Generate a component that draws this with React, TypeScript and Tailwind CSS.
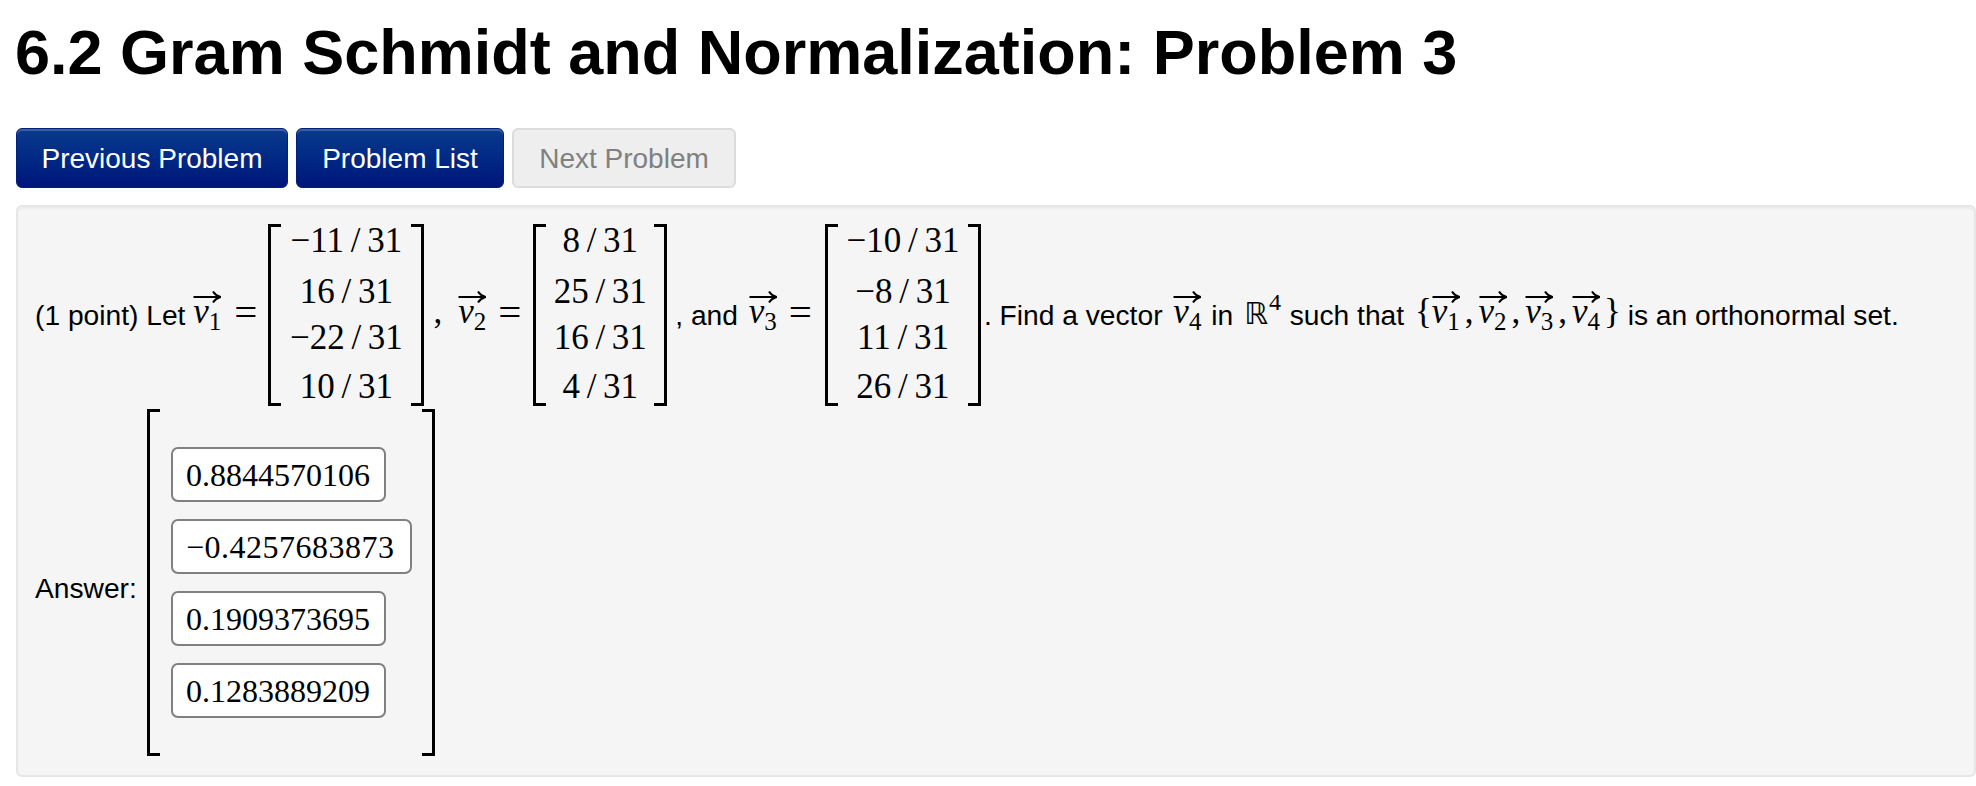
const serif = "font-['Liberation_Serif',serif]";

function Vec({ n, cls = "" }: { n: string; cls?: string }) {
  return (
    <span className={`relative inline-flex shrink-0 w-[28px] h-[50px] items-end ${serif} text-[35px] leading-[40px] text-black ${cls}`}>
      <i className="-translate-y-[8px]">v</i>
      <span className="text-[25px] leading-[25px] -translate-y-[6px]">{n}</span>
      <svg className="absolute left-0 -top-[1px]" width="28" height="16" viewBox="0 0 28 16" fill="none">
        <path d="M0.5 8H27M20 2.5C21.5 5 24 7 27.5 8C24 9 21.5 11 20 13.5" stroke="#000" strokeWidth="2" />
      </svg>
    </span>
  );
}

function Bracket({ side }: { side: "l" | "r" }) {
  return (
    <div
      className={`w-[13px] self-stretch shrink-0 border-y-[3px] border-black ${side === "l" ? "border-l-[3px]" : "border-r-[3px]"}`}
    />
  );
}

function Matrix({ rows, width }: { rows: string[]; width: string }) {
  const gaps = ["mt-0", "mt-[17px]", "mt-3", "mt-[15px]"];
  return (
    <div className={`flex shrink-0 h-[182px] ${width}`}>
      <Bracket side="l" />
      <div className={`flex-1 flex flex-col items-center ${serif} text-[35px] leading-[34px] [word-spacing:-2px]`}>
        {rows.map((r, i) => (
          <div key={i} className={gaps[i]}>
            {r}
          </div>
        ))}
      </div>
      <Bracket side="r" />
    </div>
  );
}

function Eq({ cls }: { cls: string }) {
  return <span className={`${serif} text-[41px] leading-[40px] -translate-y-[3px] ${cls}`}>=</span>;
}

function S({ children, cls = "" }: { children: string; cls?: string }) {
  return <span className={`${serif} text-[35px] -translate-y-[3px] ${cls}`}>{children}</span>;
}

function Button({ children, width, disabled }: { children: string; width: string; disabled?: boolean }) {
  return (
    <button
      className={
        disabled
          ? `${width} h-[60px] pt-[2px] rounded-[6px] border-2 border-[#dcdcdc] bg-[#eeeeee] text-[#808080] text-[28px] text-center`
          : `${width} h-[60px] pt-[2px] rounded-[6px] border border-[#00207a] bg-gradient-to-b from-[#0b3a8c] to-[#00137c] shadow-[inset_0_2px_0_rgba(255,255,255,0.2)] text-white text-[28px] text-center`
      }
    >
      {children}
    </button>
  );
}

function AnswerBox({ value, width }: { value: string; width: string }) {
  return (
    <div className={`${width} h-[55px] rounded-[7px] border-2 border-[#808080] bg-white pl-[13px] ${serif} text-[32px] leading-[53px] text-black`}>
      {value}
    </div>
  );
}

export default function App() {
  return (
    <div className="w-[1976px] h-[786px] overflow-hidden bg-white pl-4 font-['Liberation_Sans',sans-serif] text-black text-[28.2px]">
      <h1 className="h-[104px] leading-[104px] text-[63px] font-bold -ml-[1px] whitespace-nowrap">
        6.2 Gram Schmidt and Normalization: Problem 3
      </h1>
      <div className="flex gap-2 mt-6">
        <Button width="w-[272px]">Previous Problem</Button>
        <Button width="w-[208px]">Problem List</Button>
        <Button width="w-[224px]" disabled>
          Next Problem
        </Button>
      </div>
      <div className="mt-[17px] h-[572px] w-[1960px] rounded-[6px] border-2 border-[#e6e6e6] bg-[#f5f5f5] shadow-[inset_0_2px_2px_rgba(0,0,0,0.04)] pl-[17px] pt-[17px]">
        <div className="flex items-center h-[182px] whitespace-pre">
          <span>(1 point) Let </span>
          <Vec n="1" />
          <Eq cls="ml-[13px]" />
          <div className="ml-[11px]">
            <Matrix rows={["−11 / 31", "16 / 31", "−22 / 31", "10 / 31"]} width="w-[156px]" />
          </div>
          <S cls="ml-[9px]">,</S>
          <Vec n="2" cls="ml-[16px]" />
          <Eq cls="ml-[12px]" />
          <div className="ml-[12px]">
            <Matrix rows={["8 / 31", "25 / 31", "16 / 31", "4 / 31"]} width="w-[134px]" />
          </div>
          <span className="ml-[8px]">, and </span>
          <Vec n="3" cls="ml-[3px]" />
          <Eq cls="ml-[12px]" />
          <div className="ml-[13px]">
            <Matrix rows={["−10 / 31", "−8 / 31", "11 / 31", "26 / 31"]} width="w-[156px]" />
          </div>
          <span className="ml-[3px]">. Find a vector </span>
          <Vec n="4" cls="ml-[3px]" />
          <span className="ml-[10px]">in </span>
          <span className="font-['DejaVu_Sans',sans-serif] text-[30px] -translate-y-[2px] ml-[3px]">ℝ</span>
          <span className={`${serif} text-[24px] -translate-y-[13px] ml-[1px]`}>4</span>
          <span className="ml-[1px]"> such that </span>
          <S cls="ml-[3px]">{"{"}</S>
          <Vec n="1" />
          <S cls="mx-[5px]">,</S>
          <Vec n="2" />
          <S cls="mx-[5px]">,</S>
          <Vec n="3" />
          <S cls="mx-[5px]">,</S>
          <Vec n="4" />
          <S cls="ml-[4px]">{"}"}</S>
          <span className="-ml-[1px]"> is an orthonormal set.</span>
        </div>
        <div className="flex items-center h-[347px] mt-[3px]">
          <span className="w-[112px] shrink-0 translate-y-[6px]">Answer:</span>
          <div className="flex w-[288px] h-full shrink-0">
            <Bracket side="l" />
            <div className="flex-1 flex flex-col gap-[17px] pt-[38px] pl-[11px] items-start">
              <AnswerBox value="0.8844570106" width="w-[215px]" />
              <AnswerBox value="−0.4257683873" width="w-[241px] tracking-[0.5px]" />
              <AnswerBox value="0.1909373695" width="w-[215px]" />
              <AnswerBox value="0.1283889209" width="w-[215px]" />
            </div>
            <Bracket side="r" />
          </div>
        </div>
      </div>
    </div>
  );
}
